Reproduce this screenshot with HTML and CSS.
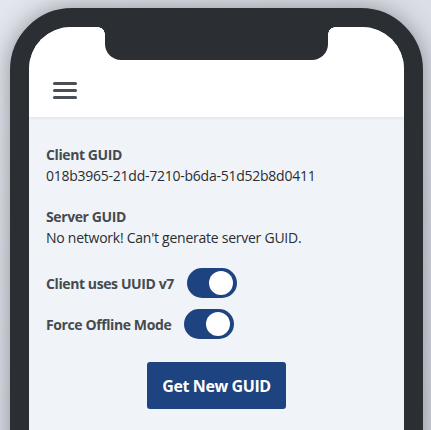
FILE: index.html
```html
<!DOCTYPE html>
<html lang="en">
<head>
    <meta charset="UTF-8">
    <meta name="viewport" content="width=device-width, initial-scale=1.0">
    <title>GUID Generator</title>
    <link rel="stylesheet" href="styles.css">
</head>
<body>
    <div class="phone">
        <div class="notch"></div>
        <div class="screen">
            <!-- Top bar with menu button -->
            <header class="topbar">
                <button class="menu-btn" aria-label="Menu">
                    <span></span><span></span><span></span>
                </button>
            </header>

            <main class="content">
                <div class="field">
                    <div class="field-label">Client GUID</div>
                    <div class="field-value">018b3965-21dd-7210-b6da-51d52b8d0411</div>
                </div>

                <div class="field">
                    <div class="field-label">Server GUID</div>
                    <div class="field-value">No network! Can't generate server GUID.</div>
                </div>

                <div class="switches">
                    <label class="switch-row">
                        <span class="field-label">Client uses UUID v7</span>
                        <input type="checkbox" checked>
                        <span class="toggle"></span>
                    </label>
                    <label class="switch-row">
                        <span class="field-label">Force Offline Mode</span>
                        <input type="checkbox" checked>
                        <span class="toggle"></span>
                    </label>
                </div>

                <div class="actions">
                    <button class="primary-btn">Get New GUID</button>
                </div>
            </main>
        </div>
    </div>
</body>
</html>
```

FILE: styles.css
```css
html, body {
    height: 100%;
    overflow: hidden;
}
body {
    margin: 0;
    padding: 8px 0 0 10px;
    background: linear-gradient(135deg, #e3e6ec 0%, #d3d7de 100%);
    font-family: "Open Sans", "Noto Sans", Arial, sans-serif;
    box-sizing: border-box;
}
.phone {
    position: relative;
    width: 413px;
    height: 560px;
    box-sizing: border-box;
    border: 19px solid #2b2f33;
    border-radius: 62px;
    background: #2b2f33;
    box-shadow: 0 0 24px rgba(40, 46, 60, 0.45);
}
.notch {
    position: absolute;
    top: -1px;
    left: 76px;
    width: 223px;
    height: 34px;
    background: #2b2f33;
    border-radius: 0 0 16px 16px;
    z-index: 2;
}
/* small fillets where the notch meets the top of the screen */
.notch::before,
.notch::after {
    content: "";
    position: absolute;
    top: 1px;
    width: 7px;
    height: 7px;
}
.notch::before {
    left: -7px;
    background: radial-gradient(circle at 0 100%, transparent 6.5px, #2b2f33 7px);
}
.notch::after {
    right: -7px;
    background: radial-gradient(circle at 100% 100%, transparent 6.5px, #2b2f33 7px);
}
.screen {
    height: 100%;
    border-radius: 42px 42px 0 0;
    overflow: hidden;
    background: #f0f4f8;
}
.topbar {
    height: 90px;
    background: #fff;
    display: flex;
    align-items: center;
    padding: 36px 0 0 24px;
    box-sizing: border-box;
    box-shadow: 0 1px 4px rgba(0, 0, 0, 0.08);
    position: relative;
}
.menu-btn {
    display: flex;
    flex-direction: column;
    gap: 4px;
    padding: 0;
    border: none;
    background: none;
    cursor: pointer;
}
.menu-btn span {
    display: block;
    width: 24px;
    height: 3px;
    border-radius: 2px;
    background: #4a4f55;
}
.content {
    padding: 27px 17px 0;
    font-size: 14px;
    line-height: 21px;
    letter-spacing: -0.25px;
    color: #2a2d31;
}
.field {
    margin-bottom: 20px;
}
.field-label {
    font-weight: 700;
    color: #464a4f;
    letter-spacing: -0.4px;
}
.switches {
    display: flex;
    flex-direction: column;
    gap: 11px;
}
.switch-row {
    display: flex;
    align-items: center;
    gap: 13px;
    cursor: pointer;
}
.switch-row input {
    display: none;
}
.toggle {
    position: relative;
    width: 50px;
    height: 30px;
    border-radius: 15px;
    background: #ccd2da;
}
.toggle::after {
    content: "";
    position: absolute;
    top: 3px;
    left: 3px;
    width: 24px;
    height: 24px;
    border-radius: 50%;
    background: #fff;
}
.switch-row input:checked + .toggle {
    background: #1e4381;
}
.switch-row input:checked + .toggle::after {
    left: 22px;
}
.actions {
    display: flex;
    justify-content: center;
    margin-top: 23px;
}
.primary-btn {
    width: 139px;
    height: 47px;
    border: none;
    border-radius: 3px;
    background: #1e4381;
    color: #fff;
    font-family: inherit;
    font-size: 16px;
    font-weight: 700;
    letter-spacing: -0.4px;
    cursor: pointer;
}
```
